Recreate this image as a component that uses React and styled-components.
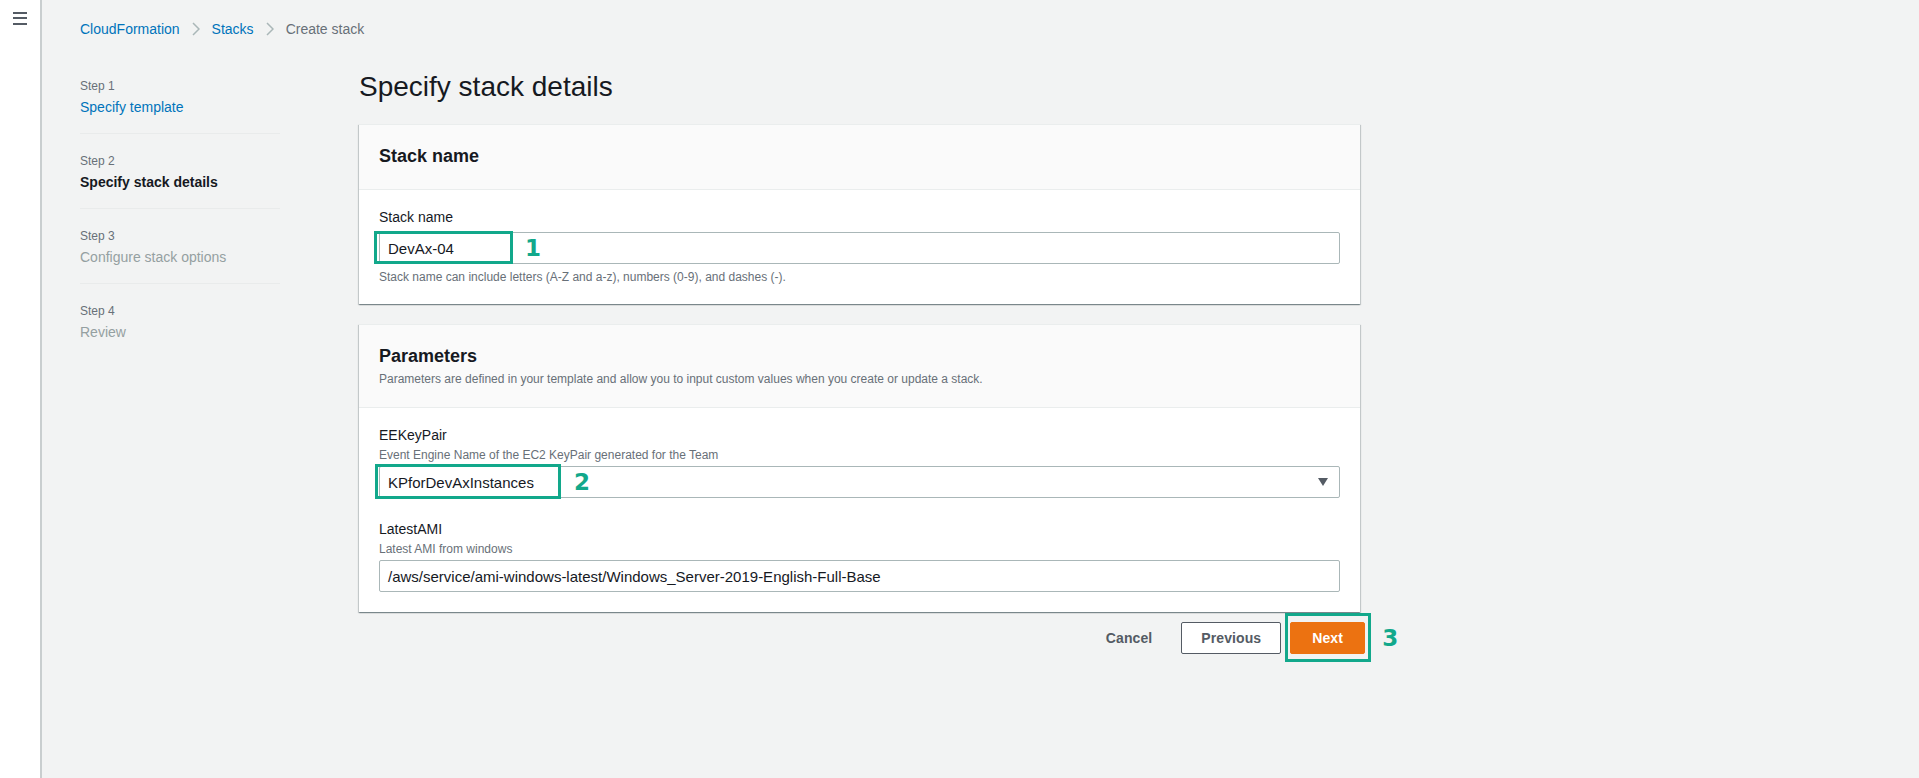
import React from 'react';
import styled, { createGlobalStyle } from 'styled-components';

const GlobalStyle = createGlobalStyle`
  * { box-sizing: border-box; }
  html, body { margin: 0; padding: 0; height: 100%; }
  body {
    background: #f2f3f3;
    font-family: "Liberation Sans", Arial, sans-serif;
    color: #16191f;
  }
  #root { height: 100%; }
`;

const ANNOT = '#12a88b';

const Shell = styled.div`
  display: flex;
  height: 100vh;
  overflow: hidden;
`;

const NavRail = styled.aside`
  flex: none;
  width: 42px;
  background: #fff;
  border-right: 2px solid #c9cecf;
  padding: 11px 0 0 13px;
`;

const Main = styled.main`
  flex: 1;
  padding: 19px 0 0 38px;
`;

const Crumbs = styled.nav`
  display: flex;
  align-items: center;
  gap: 12px;
  height: 20px;
  font-size: 14px;
  line-height: 20px;
`;

const Crumb = styled.span`
  color: ${p => (p.$current ? '#687078' : '#0073bb')};
`;

const Body = styled.div`
  display: flex;
  gap: 79px;
  margin-top: 20px;
`;

const Steps = styled.ol`
  flex: none;
  width: 200px;
  margin: 0;
  padding: 0;
  list-style: none;
`;

const Step = styled.li`
  padding: 19px 0 15px;
  border-bottom: 1px solid #e9ebeb;
  &:last-child { border-bottom: none; }
`;

const StepLabel = styled.div`
  font-size: 12px;
  line-height: 16px;
  color: #687078;
`;

const stepColors = { done: '#0073bb', active: '#16191f', todo: '#95a0a1' };

const StepTitle = styled.div`
  margin-top: 2px;
  font-size: 14px;
  line-height: 22px;
  font-weight: ${p => (p.$state === 'active' ? 700 : 400)};
  color: ${p => stepColors[p.$state]};
`;

const Content = styled.section`
  width: 1001px;
`;

const Heading = styled.h1`
  margin: 10px 0 19px;
  font-size: 28px;
  line-height: 36px;
  font-weight: 400;
`;

const Card = styled.div`
  background: #fff;
  border-top: 1px solid #eaeded;
  box-shadow: 0 1px 1px 0 rgba(0, 28, 36, 0.3), 1px 1px 1px 0 rgba(0, 28, 36, 0.15),
    -1px 1px 1px 0 rgba(0, 28, 36, 0.15);
  & + & { margin-top: 20px; }
`;

const CardHeader = styled.div`
  background: #fafafa;
  border-bottom: 1px solid #eaeded;
  padding: 19px 20px ${p => (p.$tight ? '21px' : '20px')};
`;

const CardTitle = styled.h2`
  margin: 0;
  font-size: 18px;
  line-height: 24px;
  font-weight: 700;
`;

const CardDesc = styled.p`
  margin: 3px 0 0;
  font-size: 12px;
  line-height: 16px;
  color: #687078;
`;

const CardBody = styled.div`
  display: flex;
  flex-direction: column;
  gap: 21px;
  padding: 17px 20px ${p => p.$pb || 19}px;
`;

const Field = styled.div`
  display: flex;
  flex-direction: column;
`;

const Label = styled.label`
  font-size: 14px;
  line-height: 20px;
`;

const Hint = styled.div`
  margin-top: ${p => (p.$below ? '5px' : '2px')};
  font-size: 12px;
  line-height: 16px;
  color: #687078;
`;

const Control = styled.div`
  position: relative;
  margin-top: ${p => (p.$gap ? '5px' : '3px')};
`;

const Input = styled.div`
  display: flex;
  align-items: center;
  justify-content: space-between;
  height: 32px;
  padding: 0 11px 0 8px;
  border: 1px solid #aab7b8;
  border-radius: 2px;
  background: #fff;
  font-size: 15px;
  color: #16191f;
`;

const Mark = styled.div`
  position: absolute;
  left: ${p => p.$l}px;
  top: ${p => p.$t}px;
  width: ${p => p.$w}px;
  height: ${p => p.$h}px;
  border: 3px solid ${ANNOT};
  pointer-events: none;
`;

const MarkNum = styled.span`
  position: absolute;
  left: ${p => p.$l}px;
  top: 50%;
  transform: translateY(-50%);
  font-family: "DejaVu Sans", "Liberation Sans", sans-serif;
  font-size: 23px;
  line-height: 1;
  font-weight: 700;
  color: ${ANNOT};
`;

const Actions = styled.div`
  display: flex;
  justify-content: flex-end;
  align-items: center;
  gap: 9px;
  margin: 10px -5px 0 0;
`;

const btn = {
  link: { bg: 'transparent', bd: 'transparent', fg: '#545b64' },
  normal: { bg: '#fff', bd: '#545b64', fg: '#545b64' },
  primary: { bg: '#ec7211', bd: '#ec7211', fg: '#fff' },
};

const Button = styled.button`
  height: 32px;
  padding: 0 ${p => (p.$variant === 'primary' ? '21px' : '19px')};
  border: 1px solid ${p => btn[p.$variant].bd};
  border-radius: 2px;
  background: ${p => btn[p.$variant].bg};
  color: ${p => btn[p.$variant].fg};
  font-family: inherit;
  font-size: 14px;
  font-weight: 700;
  letter-spacing: 0.1px;
`;

const ButtonSlot = styled.div`
  position: relative;
  display: flex;
`;

const Hamburger = () => (
  <svg width="14" height="13" viewBox="0 0 14 13" fill="#545b64">
    <rect x="0" y="0" width="14" height="2" />
    <rect x="0" y="5" width="14" height="2" />
    <rect x="0" y="11" width="14" height="2" />
  </svg>
);

const Chevron = () => (
  <svg width="8" height="14" viewBox="0 0 8 14" fill="none" stroke="#aab7b8" strokeWidth="1.5">
    <polyline points="1,1 7,7 1,13" />
  </svg>
);

const Caret = () => (
  <svg width="10" height="8" viewBox="0 0 10 8" fill="#545b64">
    <polygon points="0,0 10,0 5,8" />
  </svg>
);

const steps = [
  { n: 1, title: 'Specify template', state: 'done' },
  { n: 2, title: 'Specify stack details', state: 'active' },
  { n: 3, title: 'Configure stack options', state: 'todo' },
  { n: 4, title: 'Review', state: 'todo' },
];

export default function App() {
  return (
    <>
      <GlobalStyle />
      <Shell>
        <NavRail>
          <Hamburger />
        </NavRail>
        <Main>
          <Crumbs>
            <Crumb>CloudFormation</Crumb>
            <Chevron />
            <Crumb>Stacks</Crumb>
            <Chevron />
            <Crumb $current>Create stack</Crumb>
          </Crumbs>
          <Body>
            <Steps>
              {steps.map(s => (
                <Step key={s.n}>
                  <StepLabel>Step {s.n}</StepLabel>
                  <StepTitle $state={s.state}>{s.title}</StepTitle>
                </Step>
              ))}
            </Steps>
            <Content>
              <Heading>Specify stack details</Heading>

              <Card>
                <CardHeader $tight>
                  <CardTitle>Stack name</CardTitle>
                </CardHeader>
                <CardBody>
                  <Field>
                    <Label>Stack name</Label>
                    <Control $gap>
                      <Input>DevAx-04</Input>
                      <Mark $l={-5} $t={-1} $w={139} $h={33} />
                      <MarkNum $l={146}>1</MarkNum>
                    </Control>
                    <Hint $below>
                      Stack name can include letters (A-Z and a-z), numbers (0-9), and dashes (-).
                    </Hint>
                  </Field>
                </CardBody>
              </Card>

              <Card>
                <CardHeader>
                  <CardTitle>Parameters</CardTitle>
                  <CardDesc>
                    Parameters are defined in your template and allow you to input custom values when you
                    create or update a stack.
                  </CardDesc>
                </CardHeader>
                <CardBody $pb={20}>
                  <Field>
                    <Label>EEKeyPair</Label>
                    <Hint>Event Engine Name of the EC2 KeyPair generated for the Team</Hint>
                    <Control>
                      <Input>
                        <span>KPforDevAxInstances</span>
                        <Caret />
                      </Input>
                      <Mark $l={-4} $t={-2} $w={186} $h={35} />
                      <MarkNum $l={195}>2</MarkNum>
                    </Control>
                  </Field>
                  <Field>
                    <Label>LatestAMI</Label>
                    <Hint>Latest AMI from windows</Hint>
                    <Control>
                      <Input>/aws/service/ami-windows-latest/Windows_Server-2019-English-Full-Base</Input>
                    </Control>
                  </Field>
                </CardBody>
              </Card>

              <Actions>
                <Button $variant="link">Cancel</Button>
                <Button $variant="normal">Previous</Button>
                <ButtonSlot>
                  <Button $variant="primary">Next</Button>
                  <Mark $l={-5} $t={-9} $w={86} $h={49} />
                  <MarkNum $l={92}>3</MarkNum>
                </ButtonSlot>
              </Actions>
            </Content>
          </Body>
        </Main>
      </Shell>
    </>
  );
}
